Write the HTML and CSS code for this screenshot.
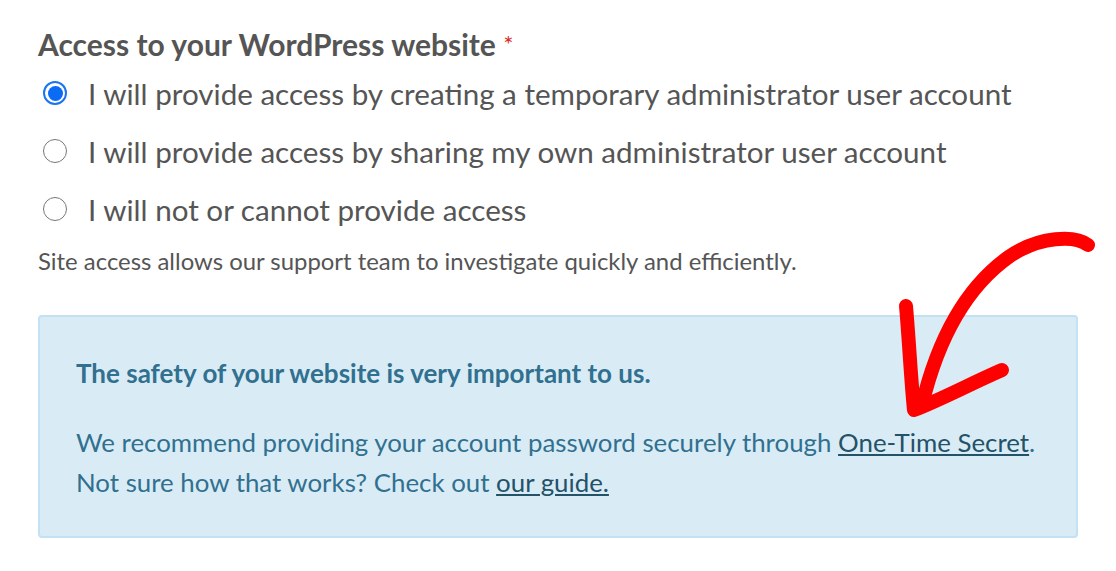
FILE: index.html
```html
<!DOCTYPE html>
<html>
<head>
<meta charset="utf-8">
<link rel="stylesheet" href="styles.css">
</head>
<body>
<div class="page">
  <div class="field">
    <div class="label">Access to your WordPress website <span class="req">*</span></div>
    <ul class="choices">
      <li class="choice"><span class="radio checked"></span><span>I will provide access by creating a temporary administrator user account</span></li>
      <li class="choice"><span class="radio"></span><span>I will provide access by sharing my own administrator user account</span></li>
      <li class="choice"><span class="radio"></span><span>I will not or cannot provide access</span></li>
    </ul>
    <div class="desc">Site access allows our support team to investigate quickly and efficiently.</div>
  </div>
  <div class="notice">
    <p class="strong">The safety of your website is very important to us.</p>
    <p class="body">We recommend providing your account password securely through <a href="#">One-Time Secret</a>.<br>Not sure how that works? Check out <a href="#">our guide.</a></p>
  </div>
  <svg class="arrow" width="1116" height="571" viewBox="0 0 1116 571">
    <path d="M1088 245 C1075 235 1040 236 1010 256 C970 284 940 330 922 405" fill="none" stroke="#ff0000" stroke-width="14" stroke-linecap="round" stroke-linejoin="round"/>
    <path d="M906 306 C909 340 911 380 914 410 C940 400 970 384 1002 370" fill="none" stroke="#ff0000" stroke-width="14" stroke-linecap="round" stroke-linejoin="round"/>
  </svg>
</div>
</body>
</html>
```
FILE: styles.css
```css
html, body {
  margin: 0;
  padding: 0;
  background: #fff;
}
.page {
  position: relative;
  width: 1116px;
  height: 571px;
  padding: 24px 38px 0 38px;
  box-sizing: border-box;
  font-family: Lato, "Open Sans", sans-serif;
  color: #555;
}
.label {
  font-size: 30px;
  font-weight: 700;
  line-height: 40px;
  height: 40px;
  color: #555;
}
.req {
  color: #e02b27;
  font-weight: 400;
  position: relative;
  top: -3px;
  font-size: 24px;
}
.choices {
  list-style: none;
  margin: 0;
  padding: 0;
}
.choice {
  display: flex;
  align-items: center;
  gap: 21px;
  height: 58px;
  font-size: 29.6px;
  color: #555;
  margin-left: 5px;
}
.radio {
  width: 24px;
  height: 24px;
  border: 1.5px solid #777;
  border-radius: 50%;
  box-sizing: border-box;
  flex: none;
  position: relative;
}
.radio.checked {
  border: 2px solid #1b74f0;
}
.radio.checked::after {
  content: "";
  position: absolute;
  left: 2.5px;
  top: 2.5px;
  width: 15px;
  height: 15px;
  border-radius: 50%;
  background: #0a6cf5;
}
.desc {
  font-size: 23.9px;
  line-height: 30px;
  color: #555;
  margin-top: 8px;
}
.notice {
  margin-top: 39px;
  width: 1040px;
  height: 223px;
  box-sizing: border-box;
  background: #d9ecf6;
  border: 2px solid #c2e1f3;
  border-radius: 4px;
  padding: 40px 20px 0 36px;
  color: #31708f;
}
.notice p {
  margin: 0;
}
.notice .strong {
  font-weight: 700;
  font-size: 26px;
  line-height: 32px;
}
.notice .body {
  font-size: 25.85px;
  line-height: 40px;
  margin-top: 33px;
  white-space: nowrap;
}
.notice a {
  color: #245269;
  text-decoration: underline;
  text-decoration-thickness: 1.5px;
  text-underline-offset: 2px;
}
.arrow {
  position: absolute;
  left: 0;
  top: 0;
  pointer-events: none;
}
```
